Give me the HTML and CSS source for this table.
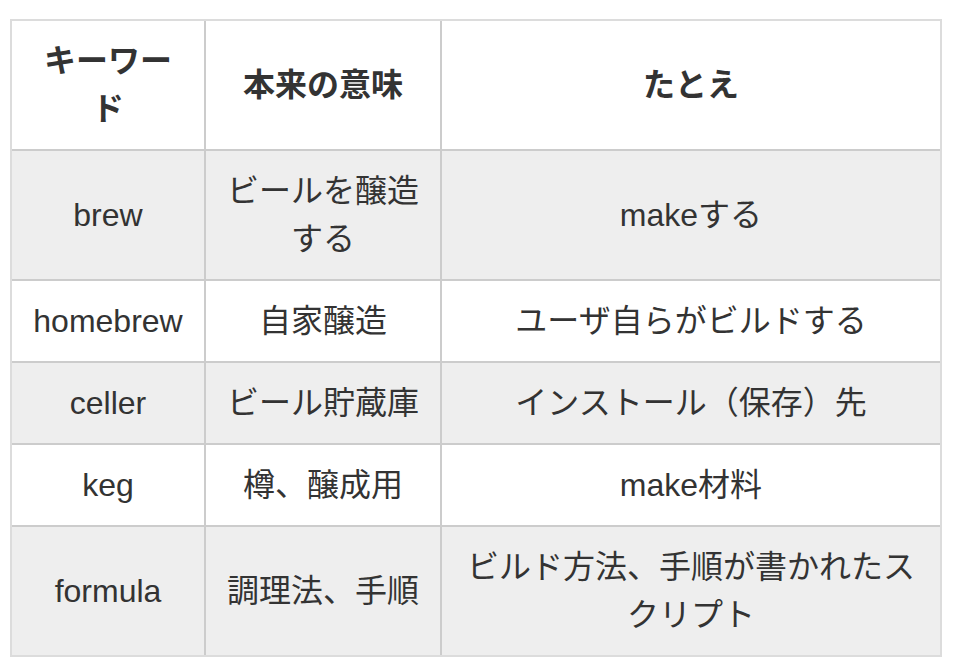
FILE: index.html
```html
<!DOCTYPE html>
<html lang="ja">
<head>
<meta charset="utf-8">
<link rel="stylesheet" href="styles.css">
</head>
<body>
<div class="wrap">
<table class="terms">
  <colgroup>
    <col class="c1"><col class="c2"><col class="c3">
  </colgroup>
  <thead>
    <tr><th>キーワード</th><th>本来の意味</th><th>たとえ</th></tr>
  </thead>
  <tbody>
    <tr class="alt"><td>brew</td><td>ビールを醸造する</td><td>makeする</td></tr>
    <tr><td>homebrew</td><td>自家醸造</td><td>ユーザ自らがビルドする</td></tr>
    <tr class="alt"><td>celler</td><td>ビール貯蔵庫</td><td>インストール（保存）先</td></tr>
    <tr><td>keg</td><td>樽、醸成用</td><td>make材料</td></tr>
    <tr class="alt last"><td>formula</td><td>調理法、手順</td><td>ビルド方法、手順が書かれたスクリプト</td></tr>
  </tbody>
</table>
</div>
</body>
</html>
```

FILE: styles.css
```css
html, body {
  margin: 0;
  padding: 0;
  background: #fff;
}
.wrap {
  padding: 19px 10px;
}
.terms {
  width: 932px;
  table-layout: fixed;
  border-collapse: separate;
  border-spacing: 0;
  border: 2px solid #dcdcdc;
  font-family: "Liberation Sans", "Noto Sans CJK JP", sans-serif;
  font-size: 32px;
  line-height: 48px;
  color: #333;
}
.c1 { width: 194px; }
.c2 { width: 236px; }
.c3 { width: 498px; }
.terms th,
.terms td {
  box-sizing: border-box;
  padding: 16px 20px;
  text-align: center;
  vertical-align: middle;
  border-right: 2px solid #cccccc;
  border-bottom: 2px solid #cccccc;
}
.terms th {
  font-weight: bold;
}
.terms th:last-child,
.terms td:last-child {
  border-right: none;
}
.terms tr.last td {
  border-bottom: none;
}
.terms tr.alt td {
  background: #eeeeee;
}
```
